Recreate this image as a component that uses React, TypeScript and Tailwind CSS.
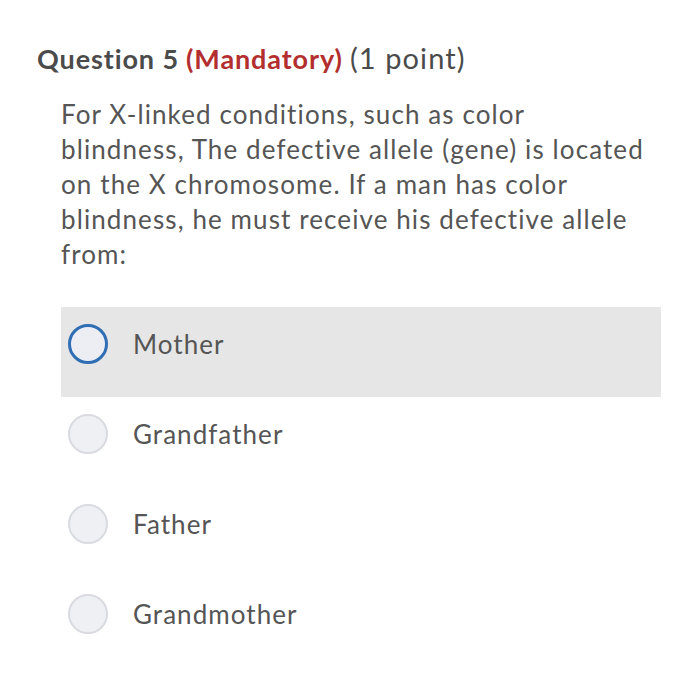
import React from "react";

function Radio({ selected }: { selected?: boolean }) {
  return selected ? (
    <div className="w-[40px] h-[40px] rounded-full border-[3px] border-[#2f6db4] bg-[#eceef4] shrink-0" />
  ) : (
    <div className="w-[40px] h-[40px] rounded-full border-[2px] border-[#d9dbe1] bg-[#eef0f4] shrink-0" />
  );
}

export default function App() {
  const options = ["Mother", "Grandfather", "Father", "Grandmother"];
  return (
    <div className="w-[700px] h-[694px] bg-white pt-[40px] pl-[37px] pr-[20px]" style={{ fontFamily: "Lato, 'Open Sans', sans-serif" }}>
      <div className="flex items-baseline text-[#4b4b4b] leading-[36px] whitespace-nowrap">
        <span className="font-bold text-[27px] tracking-[0.9px]">Question 5</span>
        <span className="font-bold text-[27px] tracking-[0.9px] text-[#b32f2f] ml-[7px]">(Mandatory)</span>
        <span className="text-[29px] tracking-[1.1px] ml-[7px]">(1 point)</span>
      </div>
      <div className="pl-[24px] mt-[20px]">
        <p className="text-[26px] leading-[35px] tracking-[1.1px] text-[#555555] whitespace-nowrap">
          For X-linked conditions, such as color
          <br />
          blindness, The defective allele (gene) is located
          <br />
          on the X chromosome. If a man has color
          <br />
          blindness, he must receive his defective allele
          <br />
          from:
        </p>
        <div className="mt-[35px] flex flex-col w-[600px]">
          {options.map((o, i) => (
            <div key={o} className={`h-[90px] pt-[17px] pl-[7px] ${i === 0 ? "bg-[#e6e6e6]" : ""}`}>
              <div className="flex items-center">
                <Radio selected={i === 0} />
                <span className="ml-[25px] text-[26px] leading-[36px] tracking-[1.05px] text-[#555555]">{o}</span>
              </div>
            </div>
          ))}
        </div>
      </div>
    </div>
  );
}
